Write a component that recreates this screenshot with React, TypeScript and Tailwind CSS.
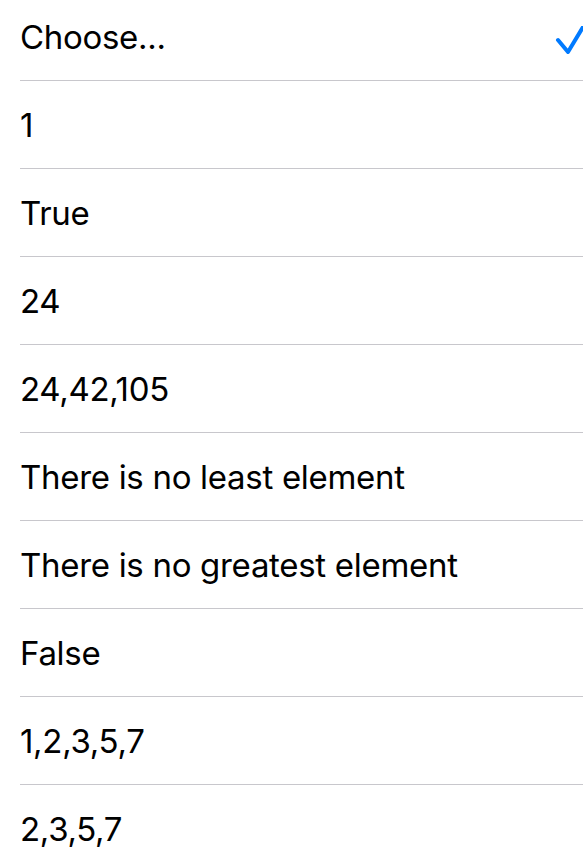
const options = [
  'Choose...',
  '1',
  'True',
  '24',
  '24,42,105',
  'There is no least element',
  'There is no greatest element',
  'False',
  '1,2,3,5,7',
  '2,3,5,7',
];

export default function App() {
  return (
    <div className="h-[868px] w-[583px] overflow-hidden bg-white">
      <ul className="-mt-[7px]">
        {options.map((label, i) => (
          <li key={label} className="pl-5">
            <div className="flex h-[88px] items-center justify-between border-b border-[#c8c7cc]">
              <span
                className="pt-[2px] text-[33px] leading-none tracking-[-0.3px] text-black"
                style={{ fontFamily: 'Inter, "Liberation Sans", sans-serif' }}
              >
                {label}
              </span>
              {i === 0 && (
                <svg
                  width="32"
                  height="30"
                  viewBox="0 0 32 30"
                  className="-mr-[4px] mt-[8px] shrink-0"
                  fill="none"
                  stroke="#007aff"
                  strokeWidth="4"
                  strokeLinecap="round"
                  strokeLinejoin="round"
                >
                  <path d="M3 14 L13 26 L28 1" />
                </svg>
              )}
            </div>
          </li>
        ))}
      </ul>
    </div>
  );
}
